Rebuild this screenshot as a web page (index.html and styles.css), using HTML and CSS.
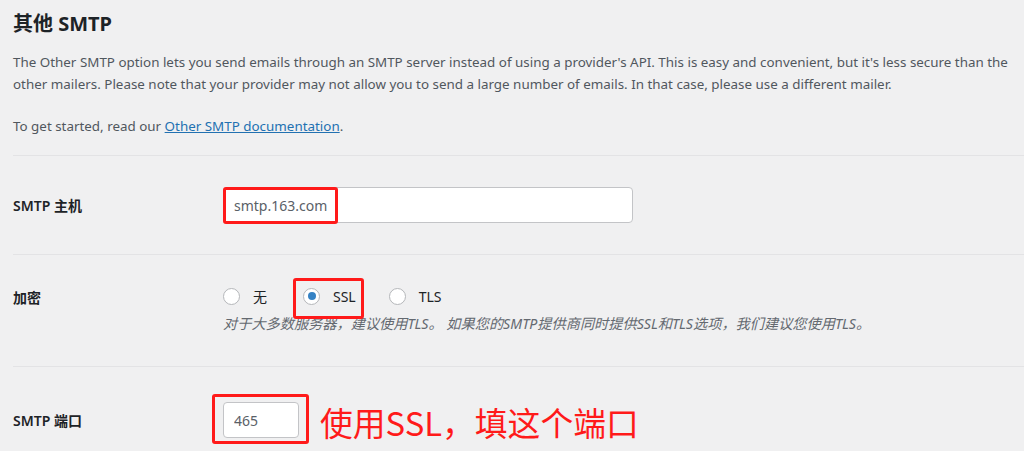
FILE: index.html
```html
<!DOCTYPE html>
<html lang="zh-CN">
<head>
<meta charset="utf-8">
<title>其他 SMTP</title>
<link rel="stylesheet" href="styles.css">
</head>
<body>
<div class="page">
  <h2 class="title">其他 SMTP</h2>
  <p class="intro">The Other SMTP option lets you send emails through an SMTP server instead of using a provider's API. This is easy and convenient, but it's less secure than the<br>other mailers. Please note that your provider may not allow you to send a large number of emails. In that case, please use a different mailer.</p>
  <p class="intro second">To get started, read our <a href="#" class="doc-link">Other SMTP documentation</a>.</p>

  <div class="row">
    <div class="label">SMTP 主机</div>
    <div class="field">
      <div class="host-wrap">
        <input class="text-input host" type="text" value="smtp.163.com">
        <span class="mark mark-host"></span>
      </div>
    </div>
  </div>

  <div class="row row-enc">
    <div class="label label-radio">加密</div>
    <div class="field">
      <div class="radios">
        <label class="radio-opt"><span class="radio"></span><span>无</span></label>
        <label class="radio-opt ssl"><span class="radio checked"></span><span>SSL</span><span class="mark mark-ssl"></span></label>
        <label class="radio-opt"><span class="radio"></span><span>TLS</span></label>
      </div>
      <p class="desc">对于大多数服务器，建议使用TLS。 如果您的SMTP提供商同时提供SSL和TLS选项，我们建议您使用TLS。</p>
    </div>
  </div>

  <div class="row">
    <div class="label">SMTP 端口</div>
    <div class="field port-field">
      <div class="port-wrap">
        <input class="text-input port" type="text" value="465">
        <span class="mark mark-port"></span>
      </div>
      <span class="note">使用SSL，填这个端口</span>
    </div>
  </div>
</div>
</body>
</html>
```

FILE: styles.css
```css
* { box-sizing: border-box; }

body {
  margin: 0;
  background: #f0f0f1;
  font-family: "Noto Sans", "Noto Sans CJK SC", sans-serif;
  color: #1d2327;
  font-size: 14px;
}

.page {
  padding: 0 0 0 13px;
}

.title {
  margin: 0;
  padding-top: 11px;
  font-size: 20px;
  line-height: 26px;
  font-weight: 700;
  color: #1d2327;
}

.intro {
  margin: 14px 0 0;
  font-size: 13.4px;
  line-height: 22px;
  color: #50575e;
  white-space: nowrap;
}

.intro.second {
  margin-top: 20px;
  margin-bottom: 18px;
}

.doc-link {
  color: #2271b1;
  text-decoration: underline;
}

.row {
  display: grid;
  grid-template-columns: 210px 1fr;
  align-items: center;
  border-top: 1px solid #e3e3e5;
  padding: 31px 0;
}

.row-enc {
  padding-bottom: 32px;
}

.row .label {
  font-weight: 600;
  font-size: 14px;
  color: #1d2327;
}

.label-radio {
  align-self: start;
  line-height: 24px;
}

.field {
  display: flex;
  flex-direction: column;
}

.host-wrap {
  position: relative;
  width: 410px;
}

.text-input {
  height: 36px;
  border: 1px solid #c3c4c7;
  border-radius: 4px;
  background: #fff;
  font-family: "Noto Sans", sans-serif;
  font-size: 14px;
  color: #5a6067;
  padding: 0 10px;
  outline: none;
}

.host {
  width: 410px;
  display: block;
}

.mark {
  position: absolute;
  border: 3px solid #ff1a1a;
  border-radius: 3px;
  pointer-events: none;
}

.mark-host {
  left: 0;
  top: 0;
  width: 115px;
  height: 37px;
}

.radios {
  display: flex;
  align-items: center;
  height: 24px;
  margin-top: -2px;
}

.radio-opt {
  position: relative;
  display: flex;
  align-items: center;
  gap: 13px;
  margin-right: 22px;
  color: #1d2327;
  font-size: 14px;
}

.radio-opt.ssl { margin-right: 33px; margin-left: 14px; }

.radio {
  width: 17px;
  height: 17px;
  border-radius: 50%;
  border: 1px solid #b5b7ba;
  background: #fff;
  display: flex;
  align-items: center;
  justify-content: center;
}

.radio.checked::before {
  content: "";
  width: 8px;
  height: 8px;
  border-radius: 50%;
  background: #3582c4;
}

.mark-ssl {
  left: -10px;
  top: -9px;
  width: 71px;
  height: 41px;
}

.desc {
  margin: 6px 0 0;
  font-size: 14.2px;
  line-height: 20px;
  font-style: italic;
  color: #646970;
}

.port-field {
  flex-direction: row;
  align-items: center;
}

.port-wrap {
  position: relative;
}

.port {
  width: 76px;
  display: block;
}

.mark-port {
  left: -11px;
  top: -8px;
  right: -10px;
  bottom: -6px;
}

.note {
  margin-left: 21px;
  font-family: "Noto Sans CJK SC", sans-serif;
  font-size: 32.8px;
  line-height: 40px;
  color: #ff1a1a;
  margin-top: 4px;
}
```
